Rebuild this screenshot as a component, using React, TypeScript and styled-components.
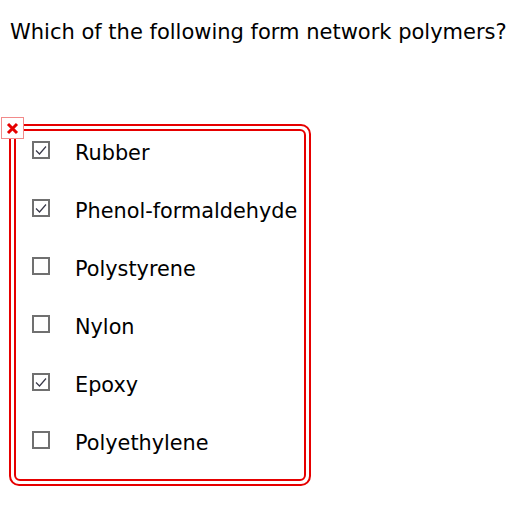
import React, { useState } from 'react';
import styled, { createGlobalStyle } from 'styled-components';

const GlobalStyle = createGlobalStyle`
  body {
    margin: 0;
    background: #fff;
    font-family: Verdana, "DejaVu Sans", sans-serif;
    color: #000;
  }
`;

const Page = styled.div`
  padding: 18px 0 20px 9px;
`;

const Question = styled.div`
  font-size: 21px;
  line-height: 28px;
  margin-left: 1px;
  margin-bottom: 78px;
`;

const Frame = styled.div`
  position: relative;
  width: 302px;
  box-sizing: border-box;
  border: 2px solid #e60000;
  border-radius: 10px;
  padding: 3px;
`;

const AnswerBox = styled.div`
  height: 352px;
  box-sizing: border-box;
  border: 2px solid #e60000;
  border-radius: 6px;
  padding: 10px 0 0 16px;
  display: flex;
  flex-direction: column;
  gap: 40px;
`;

const WrongBadge = styled.div`
  position: absolute;
  left: -10px;
  top: -9px;
  width: 23px;
  height: 22px;
  box-sizing: border-box;
  border: 1px solid #f28a8a;
  background: #fff;
  display: flex;
  align-items: center;
  justify-content: center;
`;

const Option = styled.label`
  display: flex;
  align-items: flex-start;
  height: 18px;
  font-size: 20.8px;
  cursor: pointer;
`;

const Box = styled.span`
  width: 18px;
  height: 18px;
  box-sizing: border-box;
  border: 2px solid #707070;
  background: #fff;
  display: flex;
  align-items: center;
  justify-content: center;
  margin-right: 25px;
  flex-shrink: 0;
`;

const Label = styled.span`
  line-height: 24px;
  margin-top: 0;
  white-space: nowrap;
`;

const options = [
  { name: 'Rubber', checked: true },
  { name: 'Phenol-formaldehyde', checked: true },
  { name: 'Polystyrene', checked: false },
  { name: 'Nylon', checked: false },
  { name: 'Epoxy', checked: true },
  { name: 'Polyethylene', checked: false },
];

const Tick = () => (
  <svg width="14" height="14" viewBox="0 0 14 14">
    <polyline points="2,7.5 5.5,11 12,3.5" fill="none" stroke="#3a3a4a" strokeWidth="1.2" />
  </svg>
);

const Cross = () => (
  <svg width="13" height="13" viewBox="0 0 13 13">
    <path d="M2 2 L11 11 M11 2 L2 11" stroke="#e60000" strokeWidth="3" />
  </svg>
);

const App: React.FC = () => {
  const [checks, setChecks] = useState(options.map((o) => o.checked));

  const toggle = (i: number) => {
    setChecks((prev) => prev.map((c, j) => (j === i ? !c : c)));
  };

  return (
    <Page>
      <GlobalStyle />
      <Question>Which of the following form network polymers?</Question>
      <Frame>
        <WrongBadge>
          <Cross />
        </WrongBadge>
        <AnswerBox>
          {options.map((o, i) => (
            <Option key={o.name} onClick={() => toggle(i)}>
              <Box>{checks[i] && <Tick />}</Box>
              <Label>{o.name}</Label>
            </Option>
          ))}
        </AnswerBox>
      </Frame>
    </Page>
  );
};

export default App;
